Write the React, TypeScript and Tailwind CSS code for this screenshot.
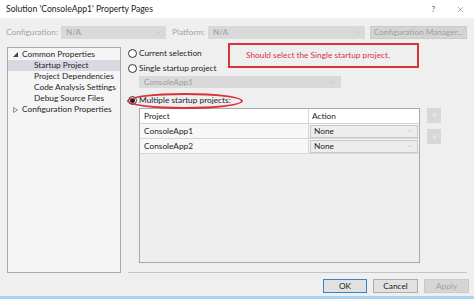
import { ChevronDown, ArrowUp, ArrowDown, X } from "lucide-react";

const font = { fontFamily: 'Lato, "Noto Sans", sans-serif' };

const treeItems = [
  { label: "Startup Project", active: true },
  { label: "Project Dependencies" },
  { label: "Code Analysis Settings" },
  { label: "Debug Source Files" },
];

const Combo = ({ text, className }: { text: string; className: string }) => (
  <div
    className={`flex items-center justify-between h-[13px] pl-[5px] pr-[4px] bg-[#d9d9d9] text-[#9e9e9e] ${className}`}
  >
    <span>{text}</span>
    <ChevronDown size={7} strokeWidth={1.5} className="text-[#b0b0b0]" />
  </div>
);

const Radio = ({ checked, label }: { checked?: boolean; label: string }) => (
  <div className="flex items-center h-[10px] gap-[2px] text-[#1e1e1e]">
    <div className="w-[9px] h-[9px] rounded-full border border-[#333] bg-white flex items-center justify-center">
      {checked && <div className="w-[5px] h-[5px] rounded-full bg-[#1e1e1e]" />}
    </div>
    <span>{label}</span>
  </div>
);

const GridRow = ({ name }: { name: string }) => (
  <div className="flex h-[15px] border-b border-[#d6d6d6] bg-[#f7f7f7]">
    <div className="w-[169px] pl-[4px] flex items-center border-r border-[#d6d6d6]">
      {name}
    </div>
    <div className="flex-1 flex items-center px-[1px]">
      <div className="w-full h-[13px] flex items-center justify-between pl-[3px] pr-[4px] bg-[#ededed] border border-[#c9c9c9]">
        <span>None</span>
        <ChevronDown size={6} strokeWidth={1.5} className="text-[#999]" />
      </div>
    </div>
  </div>
);

export default function App() {
  return (
    <div
      style={font}
      className="w-[474px] h-[299px] bg-[#efefef] flex flex-col text-[8.3px] leading-none text-[#1e1e1e] whitespace-nowrap overflow-hidden"
    >
      {/* title bar */}
      <div className="h-[18px] bg-white flex items-center justify-between pl-[6px] pr-[9px] shrink-0">
        <span className="text-[8.6px] text-[#222]">Solution 'ConsoleApp1' Property Pages</span>
        <div className="flex items-center gap-[21px] text-[#555]">
          <span className="text-[8px]">?</span>
          <X size={9} strokeWidth={1.2} />
        </div>
      </div>

      {/* configuration row */}
      <div className="flex items-center mt-[8px] pl-[6px] h-[13px] text-[#a3a3a3]">
        <span className="w-[55px]">Configuration:</span>
        <Combo text="N/A" className="w-[105px]" />
        <span className="ml-[6px] w-[36px]">Platform:</span>
        <Combo text="N/A" className="w-[157px]" />
        <div className="ml-[5px] w-[97px] h-[13px] flex items-center justify-center bg-[#d4d4d4] border border-[#cacaca] text-[#a0a0a0]">
          Configuration Manager...
        </div>
      </div>

      {/* body */}
      <div className="flex mt-[8px] h-[226px]">
        <div className="ml-[7px] w-[114px] h-full bg-[#f5f5f5] border border-[#a9a9a9] pt-[1px]">
          <div className="flex items-center h-[11px] pl-[5px] gap-[4px]">
            <svg width="5" height="5" viewBox="0 0 5 5">
              <polygon points="5,0 5,5 0,5" fill="#444" />
            </svg>
            <span>Common Properties</span>
          </div>
          {treeItems.map((it) => (
            <div
              key={it.label}
              className={`flex items-center h-[11px] pl-[26px] ${it.active ? "bg-[#d9d9e4]" : ""}`}
            >
              {it.label}
            </div>
          ))}
          <div className="flex items-center h-[11px] pl-[5px] gap-[4px]">
            <svg width="5" height="6" viewBox="0 0 5 6">
              <polygon points="0.5,0.5 4.5,3 0.5,5.5" fill="none" stroke="#777" strokeWidth="0.8" />
            </svg>
            <span>Configuration Properties</span>
          </div>
        </div>

        <div className="relative ml-[7px] w-[339px] h-full border-b border-[#c4c4c4]">
          {/* annotation */}
          <div className="absolute left-[100px] top-[-4px] w-[191px] h-[25px] border-2 border-[#d8323b] flex items-center pl-[16px] text-[#d8323b]">
            Should select the Single startup project.
          </div>

          <div className="pt-[1px]">
            <Radio label="Current selection" />
          </div>
          <div className="mt-[5px]">
            <Radio label="Single startup project" />
          </div>
          <div className="ml-[11px] mt-[3px] w-[202px] h-[12px] bg-[#d9d9d9] flex items-center justify-between pl-[5px] pr-[5px] text-[#a0a0a0]">
            <span>ConsoleApp1</span>
            <ChevronDown size={7} strokeWidth={1.5} className="text-[#b5b5b5]" />
          </div>
          <div className="relative mt-[7px]">
            <Radio checked label="Multiple startup projects:" />
            <div className="absolute left-[-1px] top-[-2px] w-[116px] h-[16px] rounded-[50%] border-2 border-[#d8323b]" />
          </div>

          <div className="flex mt-[3px]">
            <div className="ml-[11px] w-[281px] h-[155px] border border-[#a9a9a9] bg-[#eeeeee]">
              <div className="flex h-[15px] bg-white border-b border-[#d6d6d6]">
                <div className="w-[169px] pl-[4px] flex items-center border-r border-[#d6d6d6]">Project</div>
                <div className="flex-1 pl-[3px] flex items-center">Action</div>
              </div>
              <GridRow name="ConsoleApp1" />
              <GridRow name="ConsoleApp2" />
            </div>
            <div className="ml-[7px] flex flex-col gap-[6px]">
              <div className="w-[14px] h-[15px] bg-[#d8d8d8] flex items-center justify-center">
                <ArrowUp size={7} strokeWidth={1.5} className="text-white" />
              </div>
              <div className="w-[14px] h-[15px] bg-[#d8d8d8] flex items-center justify-center">
                <ArrowDown size={7} strokeWidth={1.5} className="text-white" />
              </div>
            </div>
          </div>
        </div>
      </div>

      {/* footer buttons */}
      <div className="flex justify-end gap-[6px] pr-[5px] mt-[6px]">
        <div className="w-[44px] h-[14px] flex items-center justify-center bg-[#e1e1e1] border border-[#2f86cf]">OK</div>
        <div className="w-[45px] h-[14px] flex items-center justify-center bg-[#e1e1e1] border border-[#adadad]">Cancel</div>
        <div className="w-[45px] h-[14px] flex items-center justify-center bg-[#d5d5d5] border border-[#cacaca] text-[#a3a3a3]">Apply</div>
      </div>

      <div className="mt-auto h-[3px] bg-[#aad3f0]" />
    </div>
  );
}
